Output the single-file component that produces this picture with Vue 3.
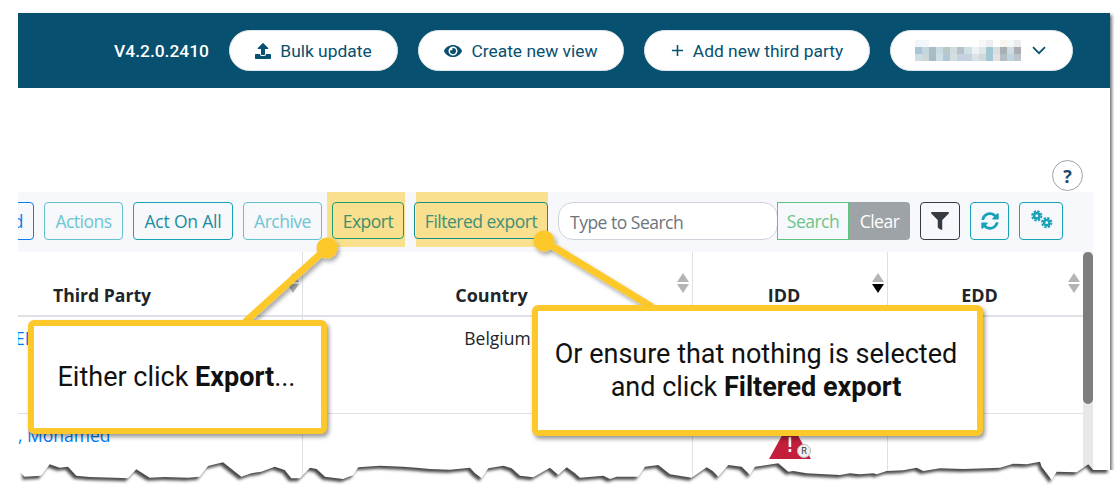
<script setup>
const row1 = ['#eff5f8','#f0f6fa','#fff','#fff','#fff','#fff','#fff','#fff','#fff','#f6f8f8','#eceef0','#fff','#f8f4ef','#f4f8f8','#e9ebee']
const row2 = ['#a9c6d8','#c4d6de','#a9bcc8','#c8dbe2','#b9c8c8','#d0dcdf','#b3c2c6','#cfe0e4','#ecf2f4','#dfe6e6','#a2c6d4','#d8dde0','#a9b0b2','#cfdde0','#a8adb6']
const row3 = ['#cddde4','#cdd8d6','#a7bcc6','#cfdfe6','#afc8d4','#d3dedf','#c3d2e0','#c6d2e0','#d8e4e6','#ced9dc','#a2c8d6','#eadfe0','#b2bec4','#c0d4de','#bcc4cc']
const pixels = [...row1, ...row2, ...row3]

const toPts = (bx, pts) => pts.map(([x, y]) => [bx + x / 3, 455 + y / 3])
const edge = [
  ...toPts(18, [[20,65],[70,62],[95,28],[125,38],[150,35],[175,62],[215,66],[290,68],[330,70],[355,43],[395,68],[440,66],[510,68],[545,65],[570,33],[615,22],[670,65],[700,55],[730,50],[770,35],[800,45],[820,70]]),
  ...toPts(290, [[30,70],[60,38],[80,42],[105,65],[160,72],[190,60],[205,37],[270,32],[340,35],[380,38],[420,42],[480,44],[540,38],[555,55],[575,70],[595,40],[640,32],[665,40],[690,62],[730,67],[780,38],[805,60]]),
  ...toPts(560, [[0,55],[20,37],[45,55],[60,68],[130,62],[150,72],[170,65],[235,65],[255,35],[295,30],[330,58],[395,68],[440,37],[458,48],[475,65],[505,30],[545,35],[570,60],[585,35],[655,25],[685,50],[700,48],[740,55],[840,60]]),
  ...toPts(840, [[30,55],[60,58],[100,55],[110,58],[140,48],[190,46],[230,38],[250,48],[300,40],[370,42],[440,40],[480,38],[520,26],[560,28],[600,20],[605,35],[635,75],[650,50],[710,52],[745,28],[760,45],[810,45]])
].map(([x, y]) => `${x.toFixed(1)},${y.toFixed(1)}`)
const edgeFill = `M0,465 L18,470 L${edge.join(' L')} L1112,470 L1120,470 L1120,497 L0,497 Z`
const paperFill = `M26,400 L${edge.join(' L')} L1110,400 Z`
</script>

<template>
  <div class="stage">
    <div class="paper">
      <header class="nav">
        <span class="version">V4.2.0.2410</span>
        <button class="pill w-bulk">
          <svg class="ico" viewBox="0 0 512 512"><path d="M296 384h-80c-13.3 0-24-10.7-24-24V192h-87.7c-17.8 0-26.7-21.5-14.1-34.1L242.3 5.7c7.5-7.5 19.8-7.5 27.3 0l152.2 152.2c12.6 12.6 3.7 34.1-14.1 34.1H320v168c0 13.3-10.7 24-24 24zm216-8v112c0 13.3-10.7 24-24 24H24c-13.3 0-24-10.7-24-24V376c0-13.3 10.7-24 24-24h136v8c0 30.9 25.1 56 56 56h80c30.9 0 56-25.1 56-56v-8h136c13.3 0 24 10.7 24 24z"/></svg>
          Bulk update
        </button>
        <button class="pill w-view">
          <svg class="ico eye" viewBox="0 0 576 512"><path d="M572.52 241.4C518.29 135.59 410.93 64 288 64S57.68 135.64 3.48 241.41a32.35 32.35 0 0 0 0 29.19C57.71 376.41 165.07 448 288 448s230.32-71.64 284.52-177.41a32.35 32.35 0 0 0 0-29.19zM288 400a144 144 0 1 1 144-144 143.93 143.93 0 0 1-144 144zm0-240a95.31 95.31 0 0 0-25.31 3.79 47.85 47.85 0 0 1-66.9 66.9A95.78 95.78 0 1 0 288 160z"/></svg>
          Create new view
        </button>
        <button class="pill w-add">
          <svg class="ico plus" viewBox="0 0 14 14"><path d="M7 1v12M1 7h12" fill="none" stroke="currentColor" stroke-width="1.7"/></svg>
          Add new third party
        </button>
        <button class="pill user">
          <span class="blur"><i v-for="(c, i) in pixels" :key="i" :style="{ background: c }"></i></span>
          <svg class="chev" viewBox="0 0 14 9"><path d="M1 1.2l6 6 6-6" fill="none" stroke="currentColor" stroke-width="1.7"/></svg>
        </button>
      </header>

      <div class="help-row"><span class="help">?</span></div>

      <div class="toolbar">
        <button class="tb part">Add</button>
        <button class="tb faded w-actions">Actions</button>
        <button class="tb teal w-act">Act On All</button>
        <button class="tb faded w-actions">Archive</button>
        <button class="tb green hl-export">Export</button>
        <button class="tb greenteal hl-filtered">Filtered export</button>
        <div class="search">
          <span class="search-input">Type to Search</span>
          <span class="search-btn">Search</span>
          <span class="clear-btn">Clear</span>
        </div>
        <button class="tb dark square">
          <svg class="tool" viewBox="0 0 512 512"><path d="M487.976 0H24.028C2.71 0-8.047 25.866 7.058 40.971L192 225.941V432c0 7.831 3.821 15.17 10.237 19.662l80 55.98C298.02 518.69 320 507.493 320 487.98V225.941l184.947-184.97C520.021 25.896 509.338 0 487.976 0z"/></svg>
        </button>
        <button class="tb teal-icon refresh">
          <svg class="tool" viewBox="0 0 512 512"><path d="M370.72 133.28C339.458 104.008 298.888 87.962 255.848 88c-77.458.068-144.328 53.178-162.791 126.85-1.344 5.363-6.122 9.15-11.651 9.15H24.103c-7.498 0-13.194-6.807-11.807-14.176C33.933 94.924 134.813 8 256 8c66.448 0 126.791 26.136 171.315 68.685L463.03 40.97C478.149 25.851 504 36.559 504 57.941V192c0 13.255-10.745 24-24 24H345.941c-21.382 0-32.09-25.851-16.971-40.971l41.75-41.749zM32 296h134.059c21.382 0 32.09 25.851 16.971 40.971l-41.75 41.75c31.262 29.273 71.835 45.319 114.876 45.28 77.418-.07 144.315-53.144 162.787-126.849 1.344-5.363 6.122-9.15 11.651-9.15h57.304c7.498 0 13.194 6.807 11.807 14.176C478.067 417.076 377.187 504 256 504c-66.448 0-126.791-26.136-171.315-68.685L48.97 471.03C33.851 486.149 8 475.441 8 454.059V320c0-13.255 10.745-24 24-24z"/></svg>
        </button>
        <button class="tb teal-icon gears">
          <svg class="gear" viewBox="0 0 22 18">
            <g fill="none" stroke="currentColor">
              <circle cx="6.5" cy="5.5" r="2.6" stroke-width="2.4"/>
              <circle cx="6.5" cy="5.5" r="4.5" stroke-width="1.8" stroke-dasharray="2.2 1.33"/>
              <circle cx="16" cy="12" r="2.6" stroke-width="2.4"/>
              <circle cx="16" cy="12" r="4.5" stroke-width="1.8" stroke-dasharray="2.2 1.33"/>
            </g>
          </svg>
        </button>
      </div>

      <div class="table">
        <div class="cols">
          <div class="th first">Third Party<span class="sort"><b></b><u></u></span></div>
          <div class="th">Country<span class="sort"><b></b><u></u></span></div>
          <div class="th">IDD<span class="sort"><b></b><u class="active"></u></span></div>
          <div class="th">EDD<span class="sort"><b></b><u></u></span></div>

          <div class="td link first r1">ER</div>
          <div class="td r1">Belgium</div>
          <div class="td r1"></div>
          <div class="td r1"></div>

          <div class="td link first r2">,&nbsp;Mohamed</div>
          <div class="td r2"></div>
          <div class="td r2 warn">
            <svg viewBox="0 0 42 38" width="42" height="38">
              <path d="M21 0L42 38H0Z" fill="#c41e3d"/>
              <rect x="19.6" y="16" width="2.6" height="10" fill="#fff"/>
              <rect x="19.6" y="28" width="2.6" height="3" fill="#fff"/>
            </svg>
            <span class="reg">R</span>
          </div>
          <div class="td r2"></div>
        </div>
        <div class="scroll"><div class="thumb"></div></div>
      </div>
    </div>

    <svg class="leaders" viewBox="0 0 1120 497" width="1120" height="497">
      <defs>
        <filter id="ls" x="-20%" y="-20%" width="140%" height="140%"><feDropShadow dx="2" dy="3" stdDeviation="2" flood-color="#000" flood-opacity=".35"/></filter>
      </defs>
      <g filter="url(#ls)" fill="#fdc82a" stroke="#fdc82a" stroke-width="7">
        <path d="M327 248L245 322" fill="none"/>
        <circle cx="327" cy="248" r="7"/>
      </g>
      <g filter="url(#ls)" fill="#fdc82a" stroke="#fdc82a" stroke-width="7">
        <path d="M544 241L652 307" fill="none"/>
        <circle cx="544" cy="241" r="7"/>
      </g>
    </svg>

    <div class="callout c-left"><p>Either click <strong>Export</strong>...</p></div>
    <div class="callout c-right"><p>Or ensure that nothing is selected<br>and click <strong>Filtered export</strong></p></div>

    <svg class="torn" viewBox="0 0 1120 497" width="1120" height="497">
      <defs>
        <clipPath id="below"><path :d="edgeFill"/></clipPath>
        <filter id="soft" x="-5%" y="-50%" width="110%" height="200%"><feGaussianBlur stdDeviation="1.4"/></filter>
      </defs>
      <path :d="edgeFill" fill="#fff"/>
      <g clip-path="url(#below)">
        <path :d="paperFill" transform="translate(-2.5 3)" fill="#4a4a4a" filter="url(#soft)"/>
      </g>
    </svg>
  </div>
</template>

<style>
html, body { margin: 0; background: #fff; overflow: hidden; }
</style>

<style scoped>
.stage { position: relative; width: 1120px; height: 497px; overflow: hidden; background: #fff; padding: 13px 0 0 18px; box-sizing: border-box; }
.paper { width: 1092px; height: 484px; background: #fff; box-shadow: 3px 1px 3px -1px rgba(0,0,0,.55); overflow: hidden; font-family: "Open Sans", sans-serif; }

.nav { height: 75px; background: #07506f; display: flex; align-items: center; justify-content: flex-end; gap: 20px; padding-right: 37px; box-sizing: border-box; font-family: Roboto, sans-serif; }
.version { color: #fff; font-size: 17.4px; font-weight: 500; }
.pill { height: 41px; border: 1px solid #dfe5e8; border-radius: 21px; background: #fff; color: #07506f; font: 400 17.4px Roboto, sans-serif; padding: 0; display: flex; align-items: center; justify-content: center; gap: 9px; box-sizing: border-box; }
.w-bulk { width: 169px; }
.w-view { width: 206px; }
.w-add { width: 226px; }
.ico { width: 16px; height: 16px; fill: currentColor; }
.ico.eye { width: 18px; }
.ico.plus { width: 13px; height: 13px; }
.user { width: 183px; padding: 0 0 0 24px; gap: 0; justify-content: flex-start; }
.blur { display: grid; grid-template-columns: repeat(15, 7.07px); grid-auto-rows: 7px; width: 106px; }
.blur i { display: block; }
.chev { width: 14px; height: 9px; margin-left: 11px; }

.help-row { height: 104px; display: flex; justify-content: flex-end; align-items: flex-end; padding: 0 27px 1px 0; box-sizing: border-box; }
.help { width: 31px; height: 31px; border: 1px solid #9aa3ad; border-radius: 50%; box-sizing: border-box; display: flex; align-items: center; justify-content: center; color: #1b4a6b; font: 700 18px "Open Sans", sans-serif; }

.toolbar { height: 60px; width: 1075px; background: #f6f8fb; display: flex; align-items: flex-start; gap: 10px; padding-top: 10px; box-sizing: border-box; overflow: hidden; isolation: isolate; }
.tb { position: relative; height: 38px; padding: 0; border: 1px solid #17a2b8; border-radius: 4px; background: transparent; font: 400 17.5px "Open Sans", sans-serif; letter-spacing: -.5px; flex: 0 0 auto; display: flex; align-items: center; justify-content: center; box-sizing: border-box; }
.part { width: 60px; margin-left: -44px; border-color: #0d7df0; color: #0d7df0; justify-content: flex-end; padding-right: 10px; }
.faded { color: #6cc5d3; border-color: #62c0cf; }
.w-actions { width: 79px; }
.teal { width: 100px; color: #1b8da2; letter-spacing: -.2px; }
.green { width: 72px; height: 37px; color: #3f8f6a; border-color: #1f9a70; }
.greenteal { width: 134px; height: 37px; color: #3f8f7a; border-color: #158f8a; }
.hl-export::before, .hl-filtered::before { content: ""; position: absolute; top: -14px; bottom: -9px; background: #f8e08e; z-index: -1; }
.hl-export::before { left: -6px; right: -2px; }
.hl-filtered::before { left: 1px; right: -1px; }
.search { display: flex; flex: 0 0 auto; height: 38px; font-size: 17.5px; letter-spacing: -.5px; }
.search-input { width: 220px; background: #fff; border: 1px solid #ced4da; border-radius: 15px; box-sizing: border-box; display: flex; align-items: center; padding: 2px 0 0 11px; color: #6c757d; margin-right: -1px; }
.search-btn { width: 72px; border: 1px solid #5fc27e; box-sizing: border-box; color: #6cc58a; display: flex; align-items: center; justify-content: center; }
.clear-btn { width: 61px; background: #9ea3a8; color: #fff; border-radius: 0 4px 4px 0; display: flex; align-items: center; justify-content: center; }
.square { width: 40px; }
.refresh { width: 39px; }
.dark { border-color: #343a40; color: #343a40; }
.teal-icon { color: #17a2b8; }
.tool { width: 18px; height: 18px; fill: currentColor; }
.gears { width: 44px; }
.gear { width: 23px; height: 19px; margin-top: -3px; }

.table { display: flex; width: 1075px; height: 300px; }
.cols { width: 1065px; display: grid; grid-template-columns: 285px 390px 195px 195px; grid-template-rows: 65px 97px auto; }
.th { position: relative; border-right: 1px solid #dee2e6; border-bottom: 2px solid #dee2e6; box-sizing: border-box; font-weight: 700; font-size: 18px; color: #212529; display: flex; justify-content: center; align-items: flex-end; padding: 0 12px 8px 0; line-height: 24px; }
.th:nth-child(4) { border-right: 0; }
.th.first { justify-content: flex-start; padding-left: 35px; font-size: 17.6px; }
.sort { position: absolute; right: 3px; top: 21px; }
.sort b, .sort u { display: block; width: 0; height: 0; border-left: 6px solid transparent; border-right: 6px solid transparent; }
.sort b { border-bottom: 9px solid #b4b4b4; margin-bottom: 2px; }
.sort u { border-top: 9px solid #b4b4b4; }
.sort u.active { border-top-color: #000; }
.td { border-right: 1px solid #dee2e6; box-sizing: border-box; font-size: 17.5px; line-height: 24px; color: #212529; text-align: center; }
.td:nth-child(4n) { border-right: 0; }
.r1 { border-bottom: 1px solid #dee2e6; padding-top: 9px; }
.r2 { height: 140px; padding-top: 9px; }
.link { color: #007bff; text-align: left; }
.link.r1 { text-indent: -3px; }
.warn { position: relative; padding-top: 7px; }
.warn svg { display: block; margin: 0 auto; }
.reg { position: absolute; left: 104px; top: 30px; width: 14px; height: 14px; border-radius: 50%; background: #f1f1f1; border: 1px solid #bbb; box-sizing: border-box; font: 9px/12px Roboto, sans-serif; color: #333; text-align: center; }
.scroll { width: 10px; background: #e8e8e8; height: 300px; }
.thumb { height: 152px; background: #7d7d7d; border-radius: 5px; }

.leaders { position: absolute; left: 0; top: 0; pointer-events: none; }
.callout { position: absolute; background: #fff; border: 6px solid #fdc82a; border-radius: 6px; box-sizing: border-box; box-shadow: 2px 3px 4px rgba(0,0,0,.4); display: flex; align-items: center; justify-content: center; font: 400 27px/33px Roboto, sans-serif; color: #111; text-align: center; }
.callout p { margin: 0; }
.callout strong { font-weight: 700; }
.c-left { left: 28px; top: 320px; width: 299px; height: 114px; padding-right: 2px; }
.c-right { left: 532px; top: 305px; width: 451px; height: 131px; padding-right: 3px; }
.torn { position: absolute; left: 0; top: 0; pointer-events: none; }
</style>
